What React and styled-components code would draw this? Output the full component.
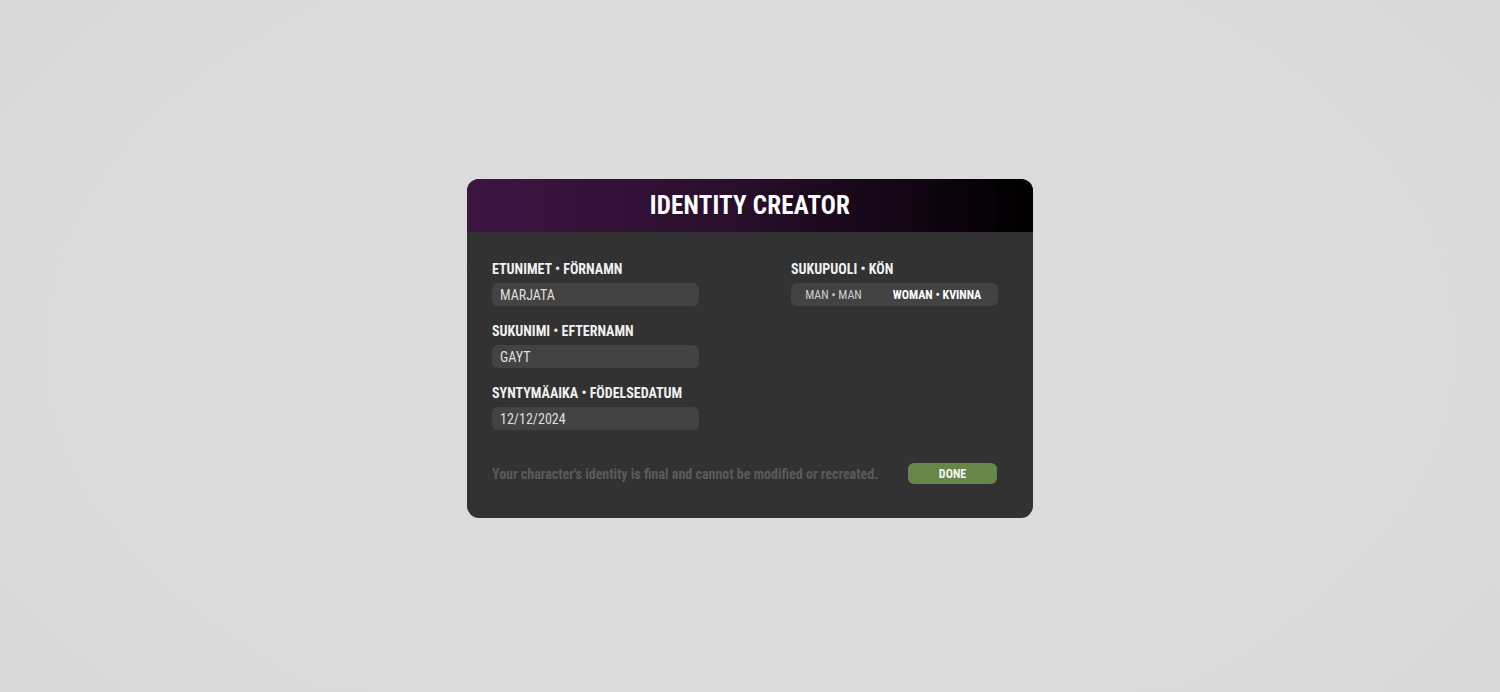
import React, { useState } from "react";
import styled, { createGlobalStyle, css } from "styled-components";

const GlobalStyle = createGlobalStyle`
  html, body {
    margin: 0;
    padding: 0;
    height: 100%;
  }
  body {
    font-family: "Roboto Condensed", "Roboto", "Liberation Sans", sans-serif;
    background: radial-gradient(ellipse 75% 100% at 50% 50%, #dcdddc 0%, #dadada 70%, #d8d8d8 100%);
  }
  #root {
    height: 100%;
  }
`;

const fields = [
  { id: "first", label: "ETUNIMET • FÖRNAMN", value: "MARJATA" },
  { id: "last", label: "SUKUNIMI • EFTERNAMN", value: "GAYT" },
  { id: "dob", label: "SYNTYMÄAIKA • FÖDELSEDATUM", value: "12/12/2024" },
];

const App = () => {
  const [gender, setGender] = useState("woman");

  return (
    <>
      <GlobalStyle />
      <StPage>
        <StCard>
          <StHeader>IDENTITY CREATOR</StHeader>

          {/* --------- form ---------- */}
          <StBody>
            <StColumns>
              <StColumn>
                {fields.map((f) => (
                  <StField key={f.id}>
                    <StLabel>{f.label}</StLabel>
                    <StInput defaultValue={f.value} />
                  </StField>
                ))}
              </StColumn>
              <StColumn>
                <StField>
                  <StLabel>SUKUPUOLI • KÖN</StLabel>
                  <StToggle>
                    <StOption
                      active={gender === "man"}
                      onClick={() => setGender("man")}
                    >
                      MAN • MAN
                    </StOption>
                    <StOption
                      active={gender === "woman"}
                      onClick={() => setGender("woman")}
                    >
                      WOMAN • KVINNA
                    </StOption>
                  </StToggle>
                </StField>
              </StColumn>
            </StColumns>

            <StFooter>
              <StNotice>
                Your character's identity is final and cannot be modified or
                recreated.
              </StNotice>
              <StDoneButton>DONE</StDoneButton>
            </StFooter>
          </StBody>
        </StCard>
      </StPage>
    </>
  );
};

const StPage = styled.div`
  height: 100%;
  display: flex;
  align-items: center;
  justify-content: center;
`;

const StCard = styled.div`
  width: 566px;
  border-radius: 12px;
  overflow: hidden;
  background-color: #323232;
  margin-top: 5px;
`;

const StHeader = styled.div`
  height: 53px;
  display: flex;
  align-items: center;
  justify-content: center;
  background: linear-gradient(90deg, #3e1542 0%, #2a0f2d 45%, #000000 100%);
  color: #ffffff;
  font-size: 25px;
  font-weight: 700;
  letter-spacing: 0.2px;
`;

const StBody = styled.div`
  padding: 28px 35px 34px 25px;
`;

const StColumns = styled.div`
  display: grid;
  grid-template-columns: 207px 207px;
  justify-content: space-between;
`;

const StColumn = styled.div`
  display: flex;
  flex-direction: column;
  gap: 16px;
`;

const StField = styled.div`
  display: flex;
  flex-direction: column;
  gap: 4px;
`;

const StLabel = styled.div`
  color: #f0f0f0;
  font-size: 14px;
  font-weight: 700;
  line-height: 19px;
`;

const StInput = styled.input`
  box-sizing: border-box;
  width: 207px;
  height: 23px;
  border: none;
  outline: none;
  border-radius: 6px;
  background-color: #434343;
  color: #dedede;
  padding: 0 8px;
  font-family: inherit;
  font-size: 14px;
`;

const StToggle = styled.div`
  box-sizing: border-box;
  width: 207px;
  height: 23px;
  border-radius: 6px;
  background-color: #434343;
  display: grid;
  grid-template-columns: 85px 1fr;
  align-items: center;
`;

const StOption = styled.div`
  text-align: center;
  font-size: 12px;
  cursor: pointer;
  ${({ active }) =>
    active
      ? css`
          color: #ffffff;
          font-weight: 700;
        `
      : css`
          color: #cfcfcf;
          font-weight: 400;
        `}
`;

const StFooter = styled.div`
  display: flex;
  align-items: center;
  justify-content: space-between;
  margin-top: 33px;
  padding-right: 1px;
`;

const StNotice = styled.p`
  margin: 0;
  color: #5a5a5a;
  font-size: 14px;
  font-weight: 700;
`;

const StDoneButton = styled.button`
  width: 89px;
  height: 21px;
  border: none;
  border-radius: 6px;
  background-color: #69864a;
  color: #f4f4f4;
  font-family: inherit;
  font-size: 12px;
  font-weight: 700;
  cursor: pointer;
`;

export default App;
